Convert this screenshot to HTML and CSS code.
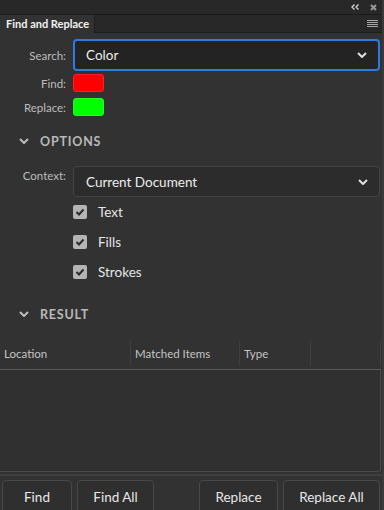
FILE: index.html
```html
<!DOCTYPE html>
<html lang="en">
<head>
    <meta charset="UTF-8">
    <title>Find and Replace</title>
    <link rel="stylesheet" href="styles.css">
</head>
<body>
    <div class="window">
        <div class="topbar">
            <svg class="collapse" width="8" height="6" viewBox="0 0 8 6"><path d="M3.5 .5L1 3L3.5 5.5M7.5 .5L5 3L7.5 5.5" stroke="#cfcfcf" stroke-width="1.4" fill="none"/></svg>
            <svg class="close" width="7" height="7" viewBox="0 0 7 7"><path d="M1 1L6 6M6 1L1 6" stroke="#9a9a9a" stroke-width="2"/></svg>
        </div>
        <div class="tabs">
            <div class="tab">Find and Replace</div>
            <svg class="menu" width="11" height="8" viewBox="0 0 11 8"><path d="M0 .5H11M0 2.5H11M0 4.5H11M0 6.5H11" stroke="#a8a8a8" stroke-width="1"/></svg>
        </div>
        <div class="panel">
            <div class="field">
                <label>Search:</label>
                <div class="select active">
                    <span>Color</span>
                    <svg width="10" height="6" viewBox="0 0 10 6"><path d="M1 1L5 5L9 1" stroke="#e0e0e0" stroke-width="2" fill="none"/></svg>
                </div>
            </div>
            <div class="field swatch-row">
                <label>Find:</label>
                <div class="swatch red"></div>
            </div>
            <div class="field swatch-row">
                <label>Replace:</label>
                <div class="swatch green"></div>
            </div>

            <div class="section">
                <svg width="10" height="6" viewBox="0 0 10 6"><path d="M1 1L5 5L9 1" stroke="#bdbdbd" stroke-width="2" fill="none"/></svg>
                <span>OPTIONS</span>
            </div>
            <div class="field">
                <label class="top">Context:</label>
                <div class="select">
                    <span>Current Document</span>
                    <svg width="10" height="6" viewBox="0 0 10 6"><path d="M1 1L5 5L9 1" stroke="#e0e0e0" stroke-width="2" fill="none"/></svg>
                </div>
            </div>
            <div class="checks">
                <div class="check"><span class="box"><svg width="10" height="8" viewBox="0 0 10 8"><path d="M1.5 4L4 6.5L8.5 1.5" stroke="#2b2b2b" stroke-width="2" fill="none"/></svg></span>Text</div>
                <div class="check"><span class="box"><svg width="10" height="8" viewBox="0 0 10 8"><path d="M1.5 4L4 6.5L8.5 1.5" stroke="#2b2b2b" stroke-width="2" fill="none"/></svg></span>Fills</div>
                <div class="check"><span class="box"><svg width="10" height="8" viewBox="0 0 10 8"><path d="M1.5 4L4 6.5L8.5 1.5" stroke="#2b2b2b" stroke-width="2" fill="none"/></svg></span>Strokes</div>
            </div>

            <div class="section result">
                <svg width="10" height="6" viewBox="0 0 10 6"><path d="M1 1L5 5L9 1" stroke="#bdbdbd" stroke-width="2" fill="none"/></svg>
                <span>RESULT</span>
            </div>
        </div>
        <div class="table">
            <div class="thead">
                <div class="col c1">Location</div>
                <div class="col c2">Matched Items</div>
                <div class="col c3">Type</div>
                <div class="col c4"></div>
            </div>
            <div class="tbody"></div>
        </div>
        <div class="divider"></div>
        <div class="buttons">
            <div class="btn b1">Find</div>
            <div class="btn b2">Find All</div>
            <div class="btn b3">Replace</div>
            <div class="btn b4">Replace All</div>
        </div>
    </div>
</body>
</html>
```

FILE: styles.css
```css
body {
    margin: 0;
    background: #323232;
    font-family: Lato, "Open Sans", sans-serif;
    color: #d8d8d8;
    overflow: hidden;
}
.window {
    width: 384px;
    height: 510px;
    display: flex;
    flex-direction: column;
    background: #323232;
    border-right: 2px solid #3a3a3a;
    box-sizing: border-box;
    overflow: hidden;
}
.topbar {
    height: 14px;
    flex-shrink: 0;
    background: #282828;
    border-bottom: 1px solid #1b1b1b;
    display: flex;
    justify-content: flex-end;
    align-items: center;
    gap: 11px;
    padding-right: 5px;
}
.tabs {
    height: 17px;
    flex-shrink: 0;
    background: #282828;
    border-bottom: 1px solid #1e1e1e;
    display: flex;
    align-items: stretch;
    justify-content: space-between;
    padding-right: 4px;
}
.tab {
    width: 95px;
    background: #323232;
    border-right: 1px solid #1e1e1e;
    color: #f2f2f2;
    font-size: 11px;
    font-weight: bold;
    line-height: 17px;
    padding-left: 6px;
    box-sizing: border-box;
    margin-bottom: -1px;
}
.menu {
    align-self: center;
}
.panel {
    padding: 6px 2px 0 0;
}
.field {
    display: flex;
    align-items: center;
}
.field label {
    width: 66px;
    text-align: right;
    font-size: 11.5px;
    color: #bdbdbd;
    margin-right: 7px;
}
.field label.top {
    align-self: flex-start;
    margin-top: 3px;
}
.select {
    flex: 1;
    height: 31px;
    box-sizing: border-box;
    border: 1px solid #444;
    border-radius: 4px;
    background: #2c2c2c;
    display: flex;
    align-items: center;
    justify-content: space-between;
    padding: 0 11px 0 12px;
    font-size: 13.5px;
    color: #ececec;
}
.select.active {
    height: 32px;
    border: 2px solid #2d7be0;
    background: #232323;
    padding-left: 11px;
}
.swatch-row {
    margin-top: 3px;
}
.swatch-row + .swatch-row {
    margin-top: 6px;
}
.swatch {
    width: 31px;
    height: 18px;
    border-radius: 3px;
    border: 1px solid #555;
    box-sizing: border-box;
}
.red { background: #ff0000; border-color: #ff2020; }
.green { background: #00ff00; border-color: #20ff20; }
.section {
    display: flex;
    align-items: center;
    height: 20px;
    margin: 15px 0 15px 19px;
    gap: 11px;
    font-size: 12.5px;
    font-weight: bold;
    letter-spacing: 0.8px;
    color: #b9b9b9;
}
.section.result {
    margin: 17px 0 15px 19px;
}
.checks {
    padding-left: 73px;
}
.check {
    height: 30px;
    display: flex;
    align-items: center;
    font-size: 13.5px;
    color: #e6e6e6;
    padding-bottom: 1px;
    box-sizing: border-box;
}
.box {
    width: 14px;
    height: 14px;
    border-radius: 2px;
    background: #b4b4b4;
    display: flex;
    align-items: center;
    justify-content: center;
    margin-right: 11px;
}
.table {
    height: 133px;
    flex-shrink: 0;
    display: flex;
    flex-direction: column;
    margin-right: 1px;
}
.thead {
    height: 30px;
    display: flex;
    border-bottom: 1px solid #5a5a5a;
    font-size: 11.5px;
    color: #c4c4c4;
}
.col {
    display: flex;
    align-items: center;
    padding-left: 4px;
    margin: 2px 0 3px;
    border-right: 1px solid #3f3f3f;
}
.c1 { width: 126px; }
.c2 { width: 104px; }
.c3 { width: 66px; }
.c4 { flex: 1; }
.tbody {
    flex: 1;
    background: #303030;
    border-right: 1px solid #4a4a4a;
    border-bottom: 1px solid #4a4a4a;
    border-bottom-right-radius: 3px;
}
.divider {
    height: 2px;
    flex-shrink: 0;
    background: #404040;
    margin-top: 2px;
}
.buttons {
    display: flex;
    flex-shrink: 0;
    margin-top: 4px;
    padding: 0 2px;
    gap: 5px;
}
.btn {
    height: 34px;
    box-sizing: border-box;
    border: 1px solid #484848;
    border-radius: 4px;
    background: #2f2f2f;
    font-size: 13.5px;
    color: #e8e8e8;
    display: flex;
    align-items: center;
    justify-content: center;
}
.b1 { width: 70px; }
.b2 { width: 77px; }
.b3 { width: 79px; margin-left: 40px; }
.b4 { width: 97px; }
```
